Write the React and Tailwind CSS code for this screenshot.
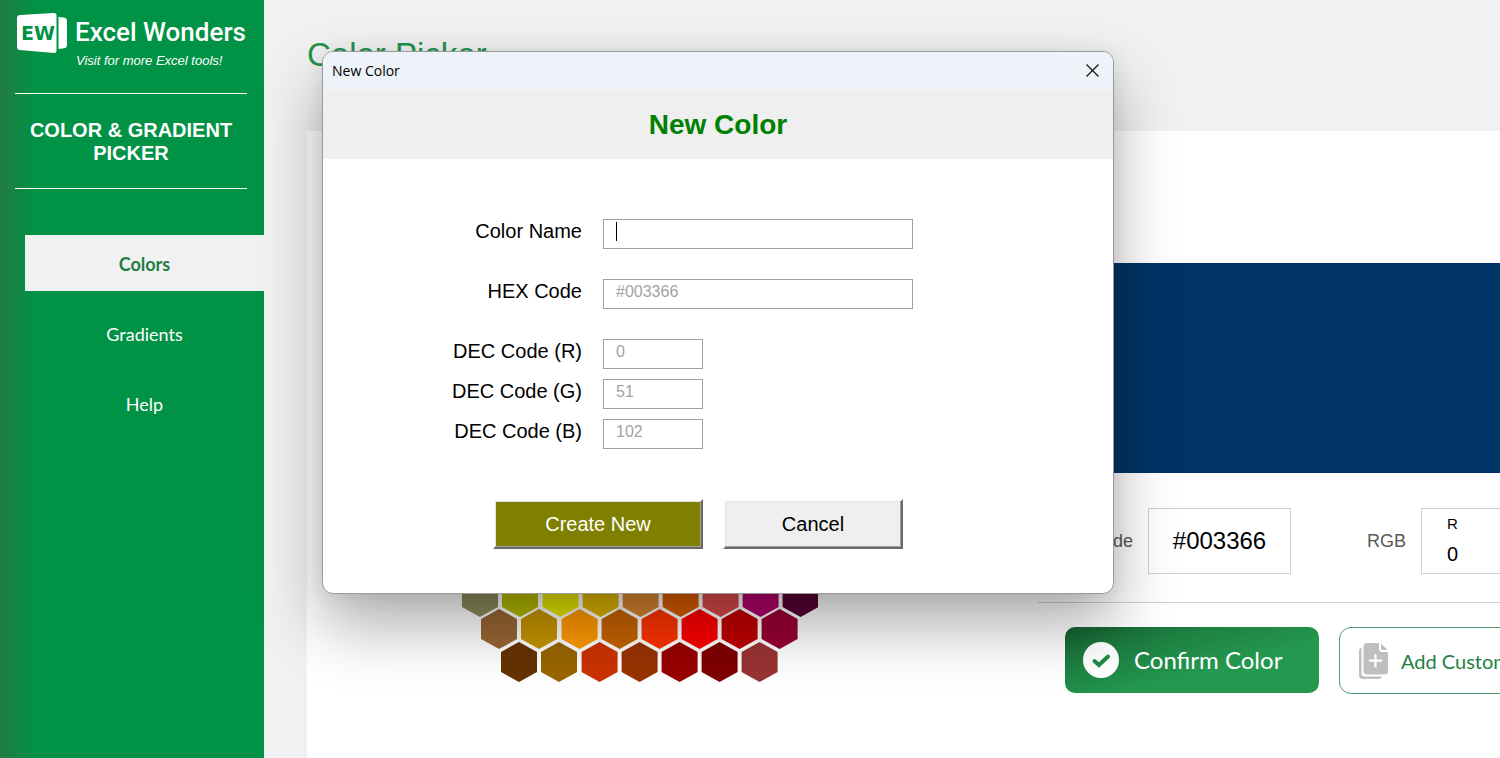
import React from "react";

const HEX_ROWS = [
  {
    y: 20,
    x: 18,
    colors: ["#8c8c5f", "#b4b900", "#e6e600", "#dcb400", "#d98530", "#d95c00", "#d94a4a", "#b4006a", "#590033"],
  },
  {
    y: 52,
    x: 37,
    colors: ["#996633", "#c69500", "#ff9900", "#c66300", "#ff3300", "#ff0000", "#c00000", "#990033"],
  },
  {
    y: 85,
    x: 57,
    colors: ["#663300", "#996600", "#cc3300", "#993300", "#990000", "#800000", "#993333"],
  },
];

function hexPoints(cx, cy) {
  return [
    [cx, cy - 20],
    [cx + 18, cy - 10],
    [cx + 18, cy + 10],
    [cx, cy + 20],
    [cx - 18, cy + 10],
    [cx - 18, cy - 10],
  ]
    .map((p) => p.join(","))
    .join(" ");
}

function Honeycomb() {
  return (
    <svg width="356" height="105" viewBox="0 0 356 105" role="img" aria-label="Color palette">
      {HEX_ROWS.map((row) =>
        row.colors.map((color, i) => (
          <polygon key={color + i} points={hexPoints(row.x + i * 40 + (i > 1 ? 0.6 : 0), row.y)} fill={color} />
        ))
      )}
    </svg>
  );
}

function LogoMark() {
  return (
    <svg width="50" height="40" viewBox="0 0 50 40" className="shrink-0" aria-hidden="true">
      <path d="M3 2 L37 0 Q39.500 0 39.500 2.500 V37.500 Q39.500 40 37 40 L3 37 Q0 36.500 0 34 V5 Q0 2.300 3 2Z" fill="#fff" />
      <path d="M41.500 4 L47 4.500 Q50 5 50 8 V32 Q50 35 47 35.300 L41.500 36Z" fill="#fff" />
      <text x="4" y="27" fontFamily="'DejaVu Sans', sans-serif" fontWeight="700" fontSize="19" fill="#009245">
        EW
      </text>
    </svg>
  );
}

function Sidebar() {
  return (
    <aside className="w-[264px] shrink-0 bg-[linear-gradient(90deg,#1f7f43_0px,#1c8043_8px,#009245_36px)] text-white">
      <div className="pr-[17px] pl-[15px]">
        <a href="#home" className="flex h-[93px] gap-2 pt-[13px] pl-[2px]">
          <LogoMark />
          <span className="flex flex-col whitespace-nowrap">
            <span className="font-[Roboto,sans-serif] text-[26px] leading-[38px] font-medium">Excel Wonders</span>
            <span className="pl-[1px] text-[13px] leading-[19px] italic">Visit for more Excel tools!</span>
          </span>
        </a>
        <h2 className="border-y border-white pt-[25px] pb-[23px] text-center text-[20px] leading-[23px] font-bold">
          COLOR &amp; GRADIENT PICKER
        </h2>
      </div>
      <nav className="mt-[46px] flex flex-col gap-[14px] pl-[25px] text-center font-[Lato,sans-serif] text-[18px]">
        <a
          href="#colors"
          className="flex h-[56px] items-center justify-center bg-[#f1f1f1] pt-[2px] font-bold text-[#1f7f43]"
        >
          Colors
        </a>
        <a href="#gradients" className="flex h-[56px] items-center justify-center pt-[2px]">
          Gradients
        </a>
        <a href="#help" className="flex h-[56px] items-center justify-center pt-[2px]">
          Help
        </a>
      </nav>
    </aside>
  );
}

function ColorDetails() {
  return (
    <section className="min-w-0 flex-1 overflow-hidden pt-[132px]">
      <div className="h-[210px] bg-[#003366]" />
      <div className="mt-[35px] flex h-[66px] items-center gap-[15px] text-[18px] text-[#595959]">
        <span className="w-[95px] shrink-0 text-right">HEX Code</span>
        <span className="flex h-full w-[143px] shrink-0 items-center justify-center border border-[#d0d0d0] text-[24px] text-black">
          #003366
        </span>
        <span className="ml-[61px] shrink-0">RGB</span>
        <dl className="h-full w-[240px] shrink-0 border border-[#d0d0d0] pl-[25px] text-black">
          <dt className="text-[15px] leading-[30px]">R</dt>
          <dd className="text-[20px] leading-[30px]">0</dd>
        </dl>
      </div>
      <hr className="mt-[28px] border-[#d0d0d0]" />
      <div className="mt-[24px] flex gap-[20px] pl-[27px] font-[Lato,sans-serif]">
        <button
          type="button"
          className="flex h-[66px] w-[254px] shrink-0 items-center gap-[15px] rounded-[10px] bg-[linear-gradient(165deg,#155f30_0%,#1d7d40_25%,#24984f_62%)] pl-[18px] text-[24px] whitespace-nowrap text-white"
        >
          <svg width="36" height="36" viewBox="0 0 36 36" aria-hidden="true">
            <circle cx="18" cy="18" r="18" fill="#fff" />
            <path d="M11.500 19 L16 23 L25 14.500" fill="none" stroke="#1f8a47" strokeWidth="4" strokeLinecap="round" />
          </svg>
          Confirm Color
        </button>
        <button
          type="button"
          className="flex h-[67px] w-[254px] shrink-0 items-center gap-[13px] rounded-[12px] border border-[#4f9a6c] bg-white pl-[19px] text-[20px] whitespace-nowrap text-[#1f7f43]"
        >
          <svg width="29" height="36" viewBox="0 0 29 36" aria-hidden="true">
            <path d="M0 8 Q0 5 2.500 4.500 V30 Q2.500 33.500 6 33.500 H23 Q22 36 19 36 H4 Q0 36 0 32Z" fill="#bfbfbf" />
            <path d="M8 0 H20 V6 Q20 9 23 9 H29 V28 Q29 31.500 25.500 31.500 H8 Q4.500 31.500 4.500 28 V3.500 Q4.500 0 8 0Z" fill="#bfbfbf" />
            <path d="M22 0.500 L28.500 7 H23.500 Q22 7 22 5.500Z" fill="#bfbfbf" />
            <path d="M16.500 12 V23.500 M10.800 17.700 H22.300" stroke="#fff" strokeWidth="2.200" strokeLinecap="round" />
          </svg>
          Add Custom Color
        </button>
      </div>
    </section>
  );
}

const FIELDS = [
  { id: "color-name", label: "Color Name", value: "", wide: true },
  { id: "hex-code", label: "HEX Code", value: "#003366", wide: true },
  { id: "dec-r", label: "DEC Code (R)", value: "0" },
  { id: "dec-g", label: "DEC Code (G)", value: "51" },
  { id: "dec-b", label: "DEC Code (B)", value: "102" },
];

function Field({ id, label, value, wide }) {
  return (
    <div className={wide ? "mb-[30px] flex gap-[21px]" : "mb-[10px] flex gap-[21px]"}>
      <label htmlFor={id} className="w-[259px] text-right text-[20px] leading-[24px]">
        {label}
      </label>
      <div className="relative">
        <input
          id={id}
          type="text"
          placeholder={value}
          className={
            (wide ? "w-[310px]" : "w-[100px]") +
            " block h-[30px] border border-[#a0a0a0] bg-white pb-[4px] pl-[12px] text-[16px] text-black outline-none placeholder:text-[#a3a3a3]"
          }
        />
        {id === "color-name" && <span className="absolute top-[3px] left-[13px] h-[19px] w-px bg-black" />}
      </div>
    </div>
  );
}

function NewColorDialog() {
  return (
    <div
      role="dialog"
      aria-labelledby="dialog-title"
      className="absolute top-[51px] left-[322px] w-[792px] overflow-hidden rounded-[11px] border border-[#9a9a9a] bg-white text-black shadow-[0_32px_64px_rgba(0,0,0,0.32),0_2px_20px_rgba(0,0,0,0.08)]"
    >
      <div className="flex h-[38px] items-center justify-between bg-[#eef3f9] pr-[14px] pb-[2px] pl-[9px]">
        <span className="font-['Open_Sans',sans-serif] text-[14px]">New Color</span>
        <button type="button" aria-label="Close">
          <svg width="13" height="13" viewBox="0 0 13 13" aria-hidden="true">
            <path d="M0.500 0.500 L12.500 12.500 M12.500 0.500 L0.500 12.500" stroke="#111" strokeWidth="1.200" />
          </svg>
        </button>
      </div>
      <h2
        id="dialog-title"
        className="flex h-[69px] items-center justify-center bg-[#efefef] text-[28px] font-bold text-[#008000]"
      >
        New Color
      </h2>
      <form className="pt-[60px] pb-[44px]">
        {FIELDS.map((field) => (
          <Field key={field.id} {...field} />
        ))}
        <div className="mt-[50px] flex gap-[20px] pl-[170px] text-[20px]">
          <button
            type="button"
            className="h-[50px] w-[210px] border-2 border-white border-r-[#696969] border-b-[#696969] bg-[#808000] text-white shadow-[inset_-1px_-1px_#a0a0a0,inset_1px_1px_#e3e3e3]"
          >
            Create New
          </button>
          <button
            type="button"
            className="h-[50px] w-[180px] border-2 border-white border-r-[#696969] border-b-[#696969] bg-[#efefef] shadow-[inset_-1px_-1px_#a0a0a0,inset_1px_1px_#e3e3e3]"
          >
            Cancel
          </button>
        </div>
      </form>
    </div>
  );
}

export default function App() {
  return (
    <div className="relative flex min-h-screen overflow-hidden bg-[#f1f1f1] font-['Liberation_Sans',Arial,sans-serif]">
      <Sidebar />
      <main className="flex min-w-0 flex-1 flex-col pl-[43px]">
        <header className="h-[131px] pt-[35px]">
          <h1 className="text-[33px] leading-[40px] text-[#24924c]">Color Picker</h1>
        </header>
        <div className="flex flex-1 bg-white">
          <section className="w-[731px] shrink-0 pt-[446px] pl-[155px]">
            <Honeycomb />
          </section>
          <ColorDetails />
        </div>
      </main>
      <NewColorDialog />
    </div>
  );
}
